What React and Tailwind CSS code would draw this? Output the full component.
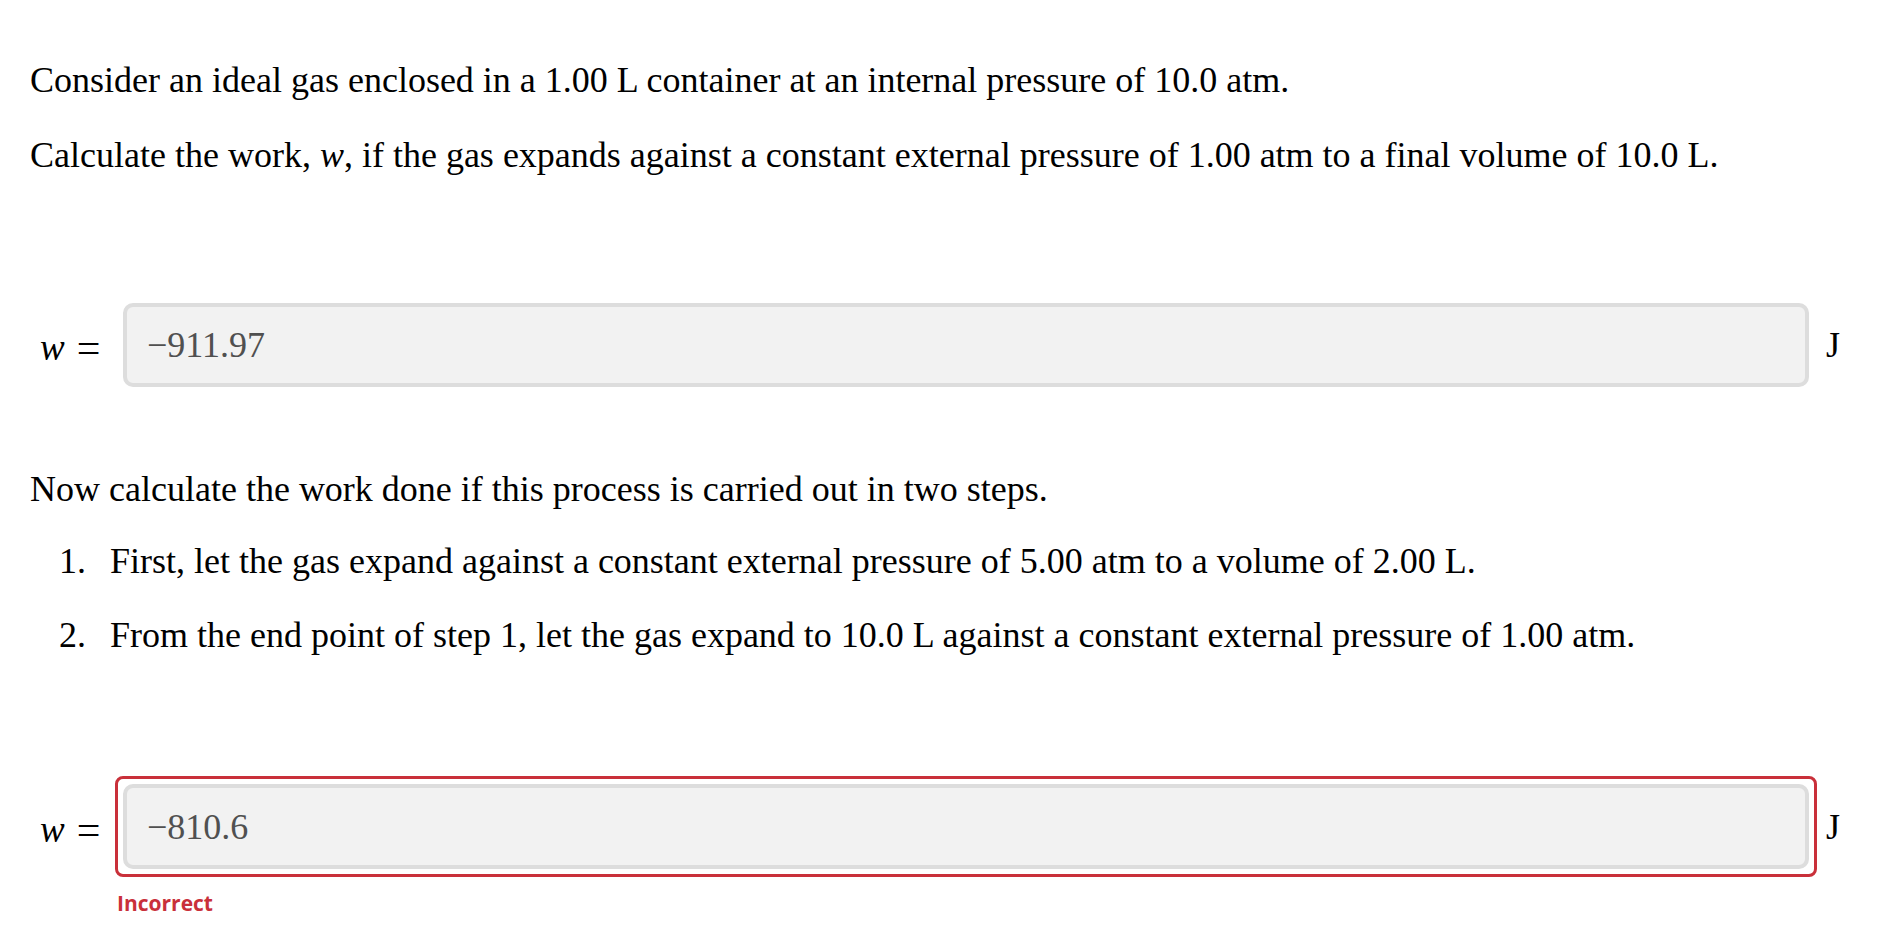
export default function App() {
  const serif = { fontFamily: '"Liberation Serif", "Times New Roman", serif' };
  return (
    <div className="min-h-screen w-full bg-white text-black" style={serif}>
      <div className="pl-[30px] pr-[46px] pt-[53px] pb-[20px] text-[36px] leading-[54px]">
        <p className="mb-[21px]">
          Consider an ideal gas enclosed in a 1.00 L container at an internal pressure of 10.0 atm.
        </p>
        <p>
          Calculate the work, <i>w</i>, if the gas expands against a constant external pressure of 1.00 atm to a final volume of 10.0 L.
        </p>

        <div className="mt-[121px] flex items-center">
          <div className="flex w-[93px] shrink-0 items-center pl-[10px] pt-[6px]">
            <i className="text-[37px]">w</i>
            <span className="ml-[12px] text-[42px]">=</span>
          </div>
          <div className="flex h-[84px] flex-1 items-center rounded-[10px] border-4 border-[#dddddd] bg-[#f2f2f2] pl-[20px] text-[#505050]">
            −911.97
          </div>
          <span className="ml-[17px] w-[14px] shrink-0">J</span>
        </div>

        <p className="mt-[75px] mb-[18px]">Now calculate the work done if this process is carried out in two steps.</p>
        <ol>
          <li className="mb-[20px] flex">
            <span className="ml-[29px] w-[51px] shrink-0">1.</span>
            <span>First, let the gas expand against a constant external pressure of 5.00 atm to a volume of 2.00 L.</span>
          </li>
          <li className="flex">
            <span className="ml-[29px] w-[51px] shrink-0">2.</span>
            <span>From the end point of step 1, let the gas expand to 10.0 L against a constant external pressure of 1.00 atm.</span>
          </li>
        </ol>

        <div className="mt-[114px] flex items-center">
          <div className="flex w-[85px] shrink-0 items-center pl-[10px] pt-[6px]">
            <i className="text-[37px]">w</i>
            <span className="ml-[12px] text-[42px]">=</span>
          </div>
          <div className="flex-1 rounded-[8px] border-[3px] border-[#c9303a] p-[5px]">
            <div className="flex h-[85px] items-center rounded-[10px] border-4 border-[#dddddd] bg-[#f2f2f2] pl-[20px] text-[#505050]">
              −810.6
            </div>
          </div>
          <span className="ml-[9px] w-[14px] shrink-0">J</span>
        </div>
        <div
          className="mt-[11px] pl-[87px] text-[21px] font-bold leading-[30px] text-[#c9303a]"
          style={{ fontFamily: '"Open Sans", "Noto Sans", sans-serif' }}
        >
          Incorrect
        </div>
      </div>
    </div>
  );
}
